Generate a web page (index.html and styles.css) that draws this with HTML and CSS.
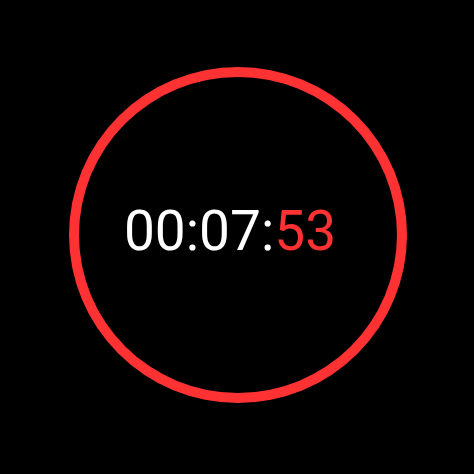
FILE: index.html
```html
<!DOCTYPE html>
<html>
<head>
<meta charset="utf-8">
<link rel="stylesheet" href="styles.css">
</head>
<body>
<div class="stage">
  <div class="ring">
    <div class="time"><span class="hm">00:07:</span><span class="sec">53</span></div>
  </div>
</div>
</body>
</html>
```
FILE: styles.css
```css
html, body {
  margin: 0;
  padding: 0;
  background: #000;
}
.stage {
  width: 474px;
  height: 474px;
  box-sizing: border-box;
  padding: 67px 0 0 69px;
  display: flex;
  align-items: flex-start;
  justify-content: flex-start;
}
.ring {
  width: 338px;
  height: 336px;
  box-sizing: border-box;
  border: 10px solid #fe3232;
  border-radius: 50%;
  display: flex;
  align-items: center;
  justify-content: center;
}
.time {
  font-family: Roboto, "Noto Sans", sans-serif;
  font-size: 55px;
  line-height: 1;
  color: #fff;
  margin: 0 16px 8px 0;
  white-space: nowrap;
}
.sec {
  color: #fe3232;
}
```
